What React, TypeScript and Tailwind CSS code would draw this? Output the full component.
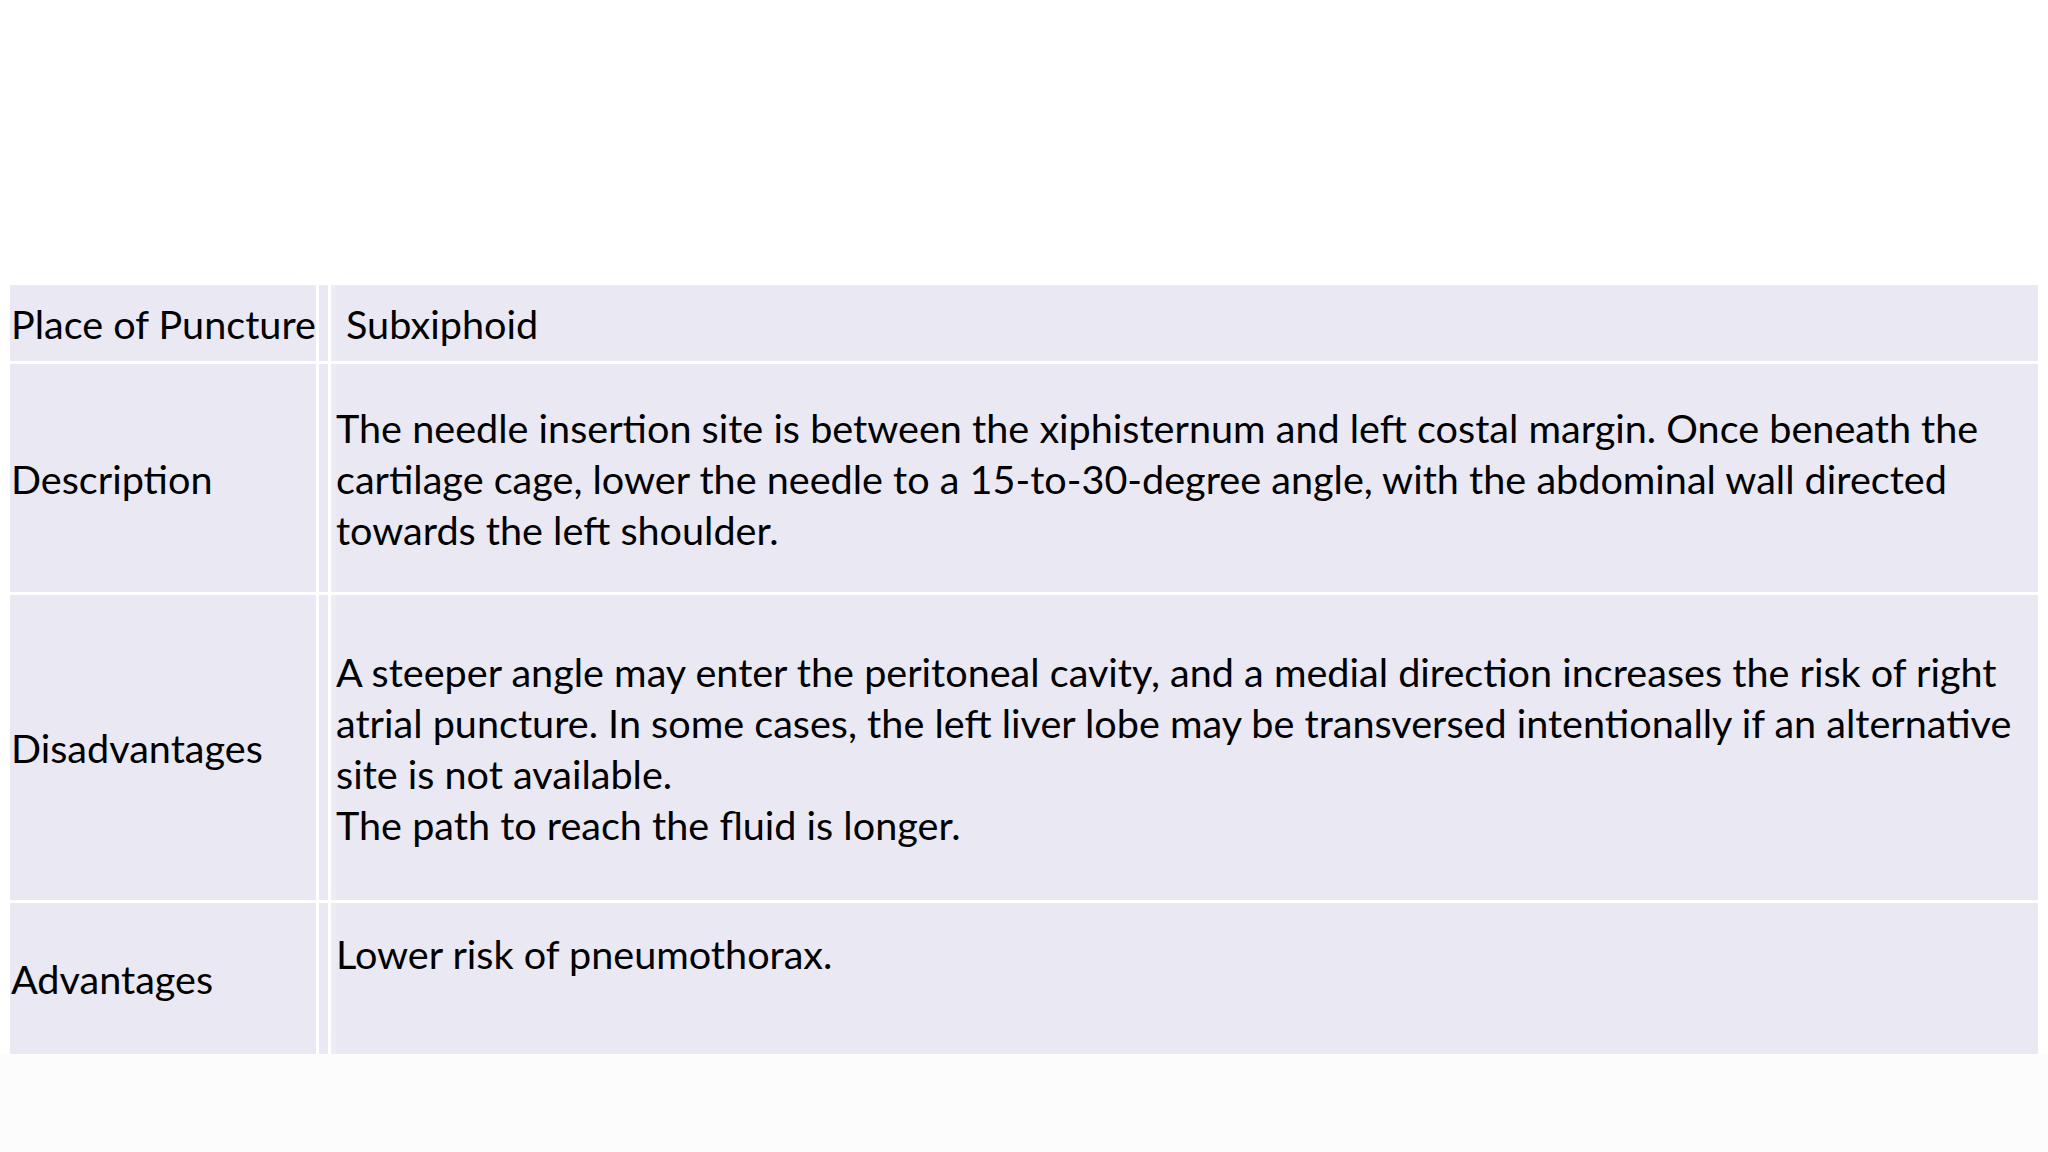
import React from "react";

const rows = [
  {
    label: "Place of Puncture",
    height: "h-[76px]",
    lines: ["Subxiphoid"],
    indent: "pl-[13px]",
  },
  {
    label: "Description",
    height: "h-[228px]",
    lines: [
      "The needle insertion site is between the xiphisternum and left costal margin. Once beneath the",
      "cartilage cage, lower the needle to a 15-to-30-degree angle, with the abdominal wall directed",
      "towards the left shoulder.",
    ],
    indent: "pl-[3px]",
  },
  {
    label: "Disadvantages",
    height: "h-[305px]",
    lines: [
      "A steeper angle may enter the peritoneal cavity, and a medial direction increases the risk of right",
      "atrial puncture. In some cases, the left liver lobe may be transversed intentionally if an alternative",
      "site is not available.",
      "The path to reach the fluid is longer.",
    ],
    indent: "pl-[3px]",
  },
  {
    label: "Advantages",
    height: "h-[151px]",
    lines: ["Lower risk of pneumothorax.", "\u00a0"],
    indent: "pl-[3px]",
  },
];

export default function App() {
  return (
    <div className="w-[2048px] h-[1152px] flex flex-col bg-white text-black font-['Lato',sans-serif] text-[39.6px] leading-[51px] overflow-hidden">
      <div className="h-[285px] shrink-0 bg-white" />

      <div className="px-[10px] flex flex-col gap-[3px] bg-white">
        {rows.map((row) => (
          <div key={row.label} className={`flex ${row.height}`}>
            <div className="w-[306px] shrink-0 bg-[#e9e8f3] flex items-center pl-[1px] whitespace-nowrap">
              {row.label}
            </div>
            <div className="w-[3px] shrink-0 bg-white" />
            <div className="w-[9px] shrink-0 bg-[#e9e8f3]" />
            <div className="w-[3px] shrink-0 bg-white" />
            <div className={`flex-1 min-w-0 overflow-hidden bg-[#e9e8f3] border-l-[5px] border-[#eeedf6] flex flex-col justify-center ${row.indent}`}>
              {row.lines.map((line, i) => (
                <div key={i} className="whitespace-nowrap -ml-[3px]">
                  {line}
                </div>
              ))}
            </div>
          </div>
        ))}
      </div>

      <div className="flex-1 bg-[#fcfcfc]" />
    </div>
  );
}
